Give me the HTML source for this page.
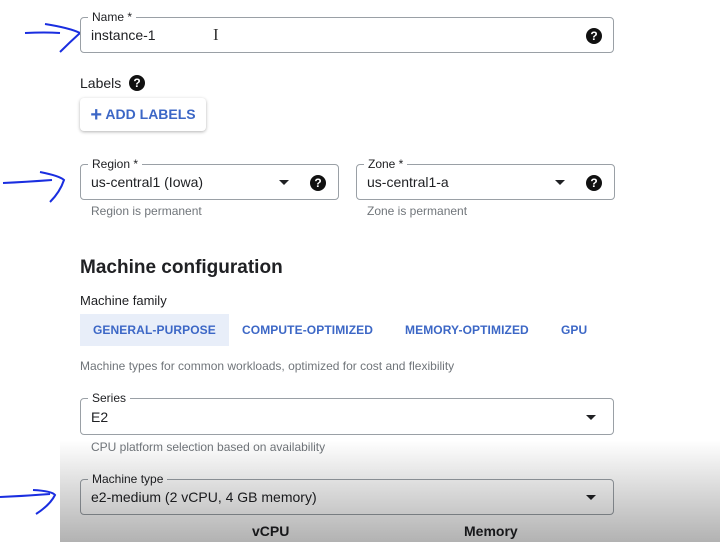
<!DOCTYPE html>
<html><head><style>
body{margin:0;width:720px;height:542px;background:#fff;position:relative;overflow:hidden;font-family:"Liberation Sans",sans-serif;color:#202124}
.a{position:absolute}
.box{position:absolute;border:1px solid #9aa0a6;border-radius:4px;box-sizing:border-box}
.lg{position:absolute;top:-9px;left:7px;background:#fff;padding:0 4px;font-size:12px;color:#202124;line-height:16px}
.val{position:absolute;left:10px;font-size:14px;color:#202124}
.q{position:absolute;width:16px;height:16px;border-radius:50%;background:#111;color:#fff;font-size:12px;font-weight:bold;text-align:center;line-height:16px}
.tri{position:absolute;width:0;height:0;border-left:5px solid transparent;border-right:5px solid transparent;border-top:5px solid #202124}
.help{position:absolute;font-size:12px;color:#70757a}
.tab{position:absolute;top:314px;height:32px;line-height:32px;font-size:12px;color:#3c67c6;font-weight:bold;letter-spacing:.1px}
</style></head><body>
<svg class="a" style="left:0;top:0" width="80" height="542">
<path d="M25 33 Q45 32 60 33 M45 24 Q70 28 80 33 Q70 42 60 52" stroke="#1a2ee0" stroke-width="2" fill="none"/>
<path d="M3 183 Q25 182 52 180 M40 172 Q60 176 64 180 Q60 192 50 202" stroke="#1a2ee0" stroke-width="2" fill="none"/>
<path d="M0 497 Q25 496 50 494 M33 490 Q52 491 55 495 Q50 505 36 514" stroke="#1a2ee0" stroke-width="2" fill="none"/>
</svg>
<div class="box" style="left:80px;top:17px;width:534px;height:36px"><div class="lg">Name *</div><div class="val" style="top:9px">instance-1</div><div class="q" style="right:11px;top:10px">?</div></div>
<div class="a" style="left:213px;top:25px;font-size:17px;color:#333;font-family:'Liberation Serif',serif">I</div>
<div class="a" style="left:80px;top:75px;font-size:14px">Labels</div><div class="q" style="left:129px;top:75px">?</div>
<div class="a" style="left:80px;top:98px;width:126px;height:33px;border-radius:4px;box-shadow:0 1px 3px rgba(0,0,0,.3);font-size:14px;font-weight:bold;color:#3c67c6;line-height:33px;text-align:center"><span style="font-size:20px;vertical-align:-2px">+</span> ADD LABELS</div>
<div class="box" style="left:80px;top:164px;width:259px;height:36px"><div class="lg">Region *</div><div class="val" style="top:9px">us-central1 (Iowa)</div><div class="tri" style="left:198px;top:15px"></div><div class="q" style="right:12px;top:10px">?</div></div>
<div class="help" style="left:91px;top:204px">Region is permanent</div>
<div class="box" style="left:356px;top:164px;width:259px;height:36px"><div class="lg">Zone *</div><div class="val" style="top:9px">us-central1-a</div><div class="tri" style="left:198px;top:15px"></div><div class="q" style="right:12px;top:10px">?</div></div>
<div class="help" style="left:367px;top:204px">Zone is permanent</div>
<div class="a" style="left:80px;top:257px;font-size:19px;font-weight:bold">Machine configuration</div>
<div class="a" style="left:80px;top:293px;font-size:13px">Machine family</div>
<div class="a" style="left:80px;top:314px;width:149px;height:32px;background:#e8eef9"></div>
<div class="tab" style="left:93px">GENERAL-PURPOSE</div>
<div class="tab" style="left:242px">COMPUTE-OPTIMIZED</div>
<div class="tab" style="left:405px">MEMORY-OPTIMIZED</div>
<div class="tab" style="left:561px">GPU</div>
<div class="help" style="left:80px;top:359px">Machine types for common workloads, optimized for cost and flexibility</div>
<div class="box" style="left:80px;top:398px;width:534px;height:37px"><div class="lg">Series</div><div class="val" style="top:10px">E2</div><div class="tri" style="right:17px;top:16px"></div></div>
<div class="help" style="left:91px;top:440px">CPU platform selection based on availability</div>
<div class="box" style="left:80px;top:479px;width:534px;height:36px"><div class="lg">Machine type</div><div class="val" style="top:9px">e2-medium (2 vCPU, 4 GB memory)</div><div class="tri" style="right:17px;top:15px"></div></div>
<div class="a" style="left:252px;top:523px;font-size:14px;font-weight:bold">vCPU</div>
<div class="a" style="left:464px;top:523px;font-size:14px;font-weight:bold">Memory</div>
<div class="a" style="left:60px;top:440px;width:660px;height:102px;background:linear-gradient(rgba(0,0,0,0),rgba(0,0,0,.12) 40%,rgba(0,0,0,.3))"></div>
</body></html>
